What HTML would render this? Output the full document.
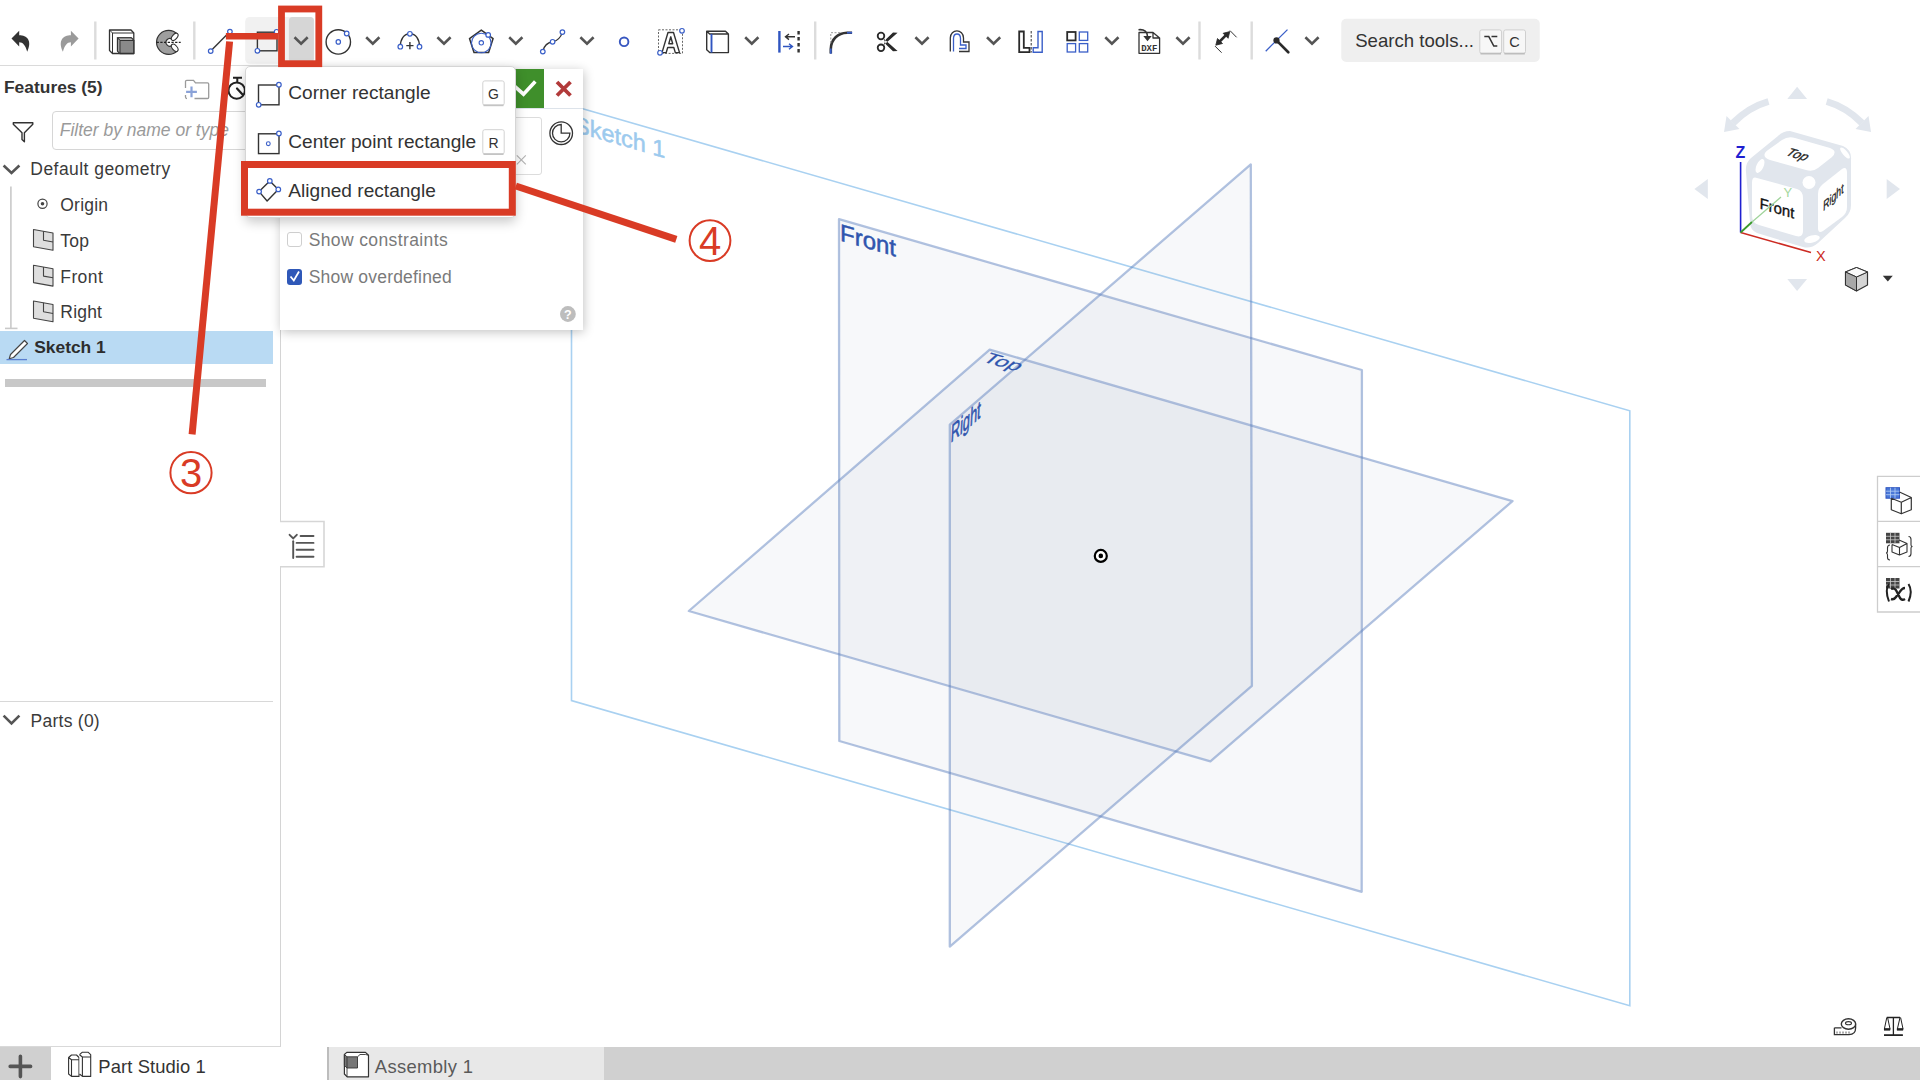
<!DOCTYPE html>
<html><head><meta charset="utf-8">
<style>
*{margin:0;padding:0;box-sizing:border-box}
html,body{width:1920px;height:1080px;overflow:hidden;background:#fff;font-family:"Liberation Sans",sans-serif;color:#333}
.a{position:absolute;white-space:nowrap}
.t{position:absolute;white-space:nowrap;line-height:1;font-size:17.5px;color:#3a3a3a}
svg{position:absolute;overflow:visible}
</style></head><body>

<!-- VIEWPORT SVG -->
<svg id="vp" style="left:0;top:0" width="1920" height="1080" viewBox="0 0 1920 1080">
  <!-- sketch plane outline -->
  <polygon points="571.5,105.6 1629.8,410.8 1629.8,1005.8 571.5,700.6" fill="none" stroke="#a9d1f1" stroke-width="1.6"/>
  <!-- planes -->
  <g fill="#a0acc0" fill-opacity="0.085" stroke="#5a7dbe" stroke-opacity="0.47" stroke-width="2.3" stroke-linejoin="round">
    <polygon points="839,219.2 1361.9,370 1361.7,891.8 839.3,741"/>
    <polygon points="688.8,611 989.7,349.7 1512.5,501.1 1210.4,761.4"/>
    <polygon points="949.8,424.7 1250.8,164.4 1251.9,685.9 949.8,946.6"/>
  </g>
  <!-- plane labels -->
  <text transform="matrix(1,0.2883,0,1,840,240.5)" font-family="Liberation Sans" font-size="24" fill="#2f55ae" stroke="#2f55ae" stroke-width="0.5">Front</text>
  <text transform="matrix(1.23,0.356,-0.79,0.686,981,361)" font-family="Liberation Sans" font-size="18" fill="#2f55ae" stroke="#2f55ae" stroke-width="0.25">Top</text>
  <text transform="matrix(0.747,-0.646,-0.075,1.494,950.6,443.1)" font-family="Liberation Sans" font-size="17" fill="#2f55ae" stroke="#2f55ae" stroke-width="0.5">Right</text>
  <text transform="matrix(1,0.2884,0,1,574,131.8)" font-family="Liberation Sans" font-size="23.5" fill="#9ccaee" stroke="#9ccaee" stroke-width="0.5">Sketch 1</text>
  <!-- origin -->
  <circle cx="1100.8" cy="555.9" r="6" fill="#fff" stroke="#000" stroke-width="2.2"/>
  <circle cx="1100.8" cy="555.9" r="2.3" fill="#000"/>
</svg>

<!-- VIEW CUBE -->
<svg style="left:0;top:0" width="1920" height="320">
<g fill="#e1e6ed">
<polygon points="1797.1,86.7 1787.3,98.9 1807.1,98.9"/>
<polygon points="1797.1,291.1 1787.3,278.9 1807.1,278.9"/>
<polygon points="1694.4,188.9 1707.8,178.9 1707.8,198.9"/>
<polygon points="1900,188.9 1886.7,178.9 1886.7,198.9"/>
</g>
<g fill="none" stroke="#e1e6ed" stroke-width="7">
<path d="M1768.5,101.5 C1756,105 1743,113 1733,123"/>
<path d="M1826.7,101.5 C1839,105 1852,113 1862,123"/>
</g>
<g fill="#e1e6ed">
<polygon points="1724,132 1726.5,116 1739.5,129"/>
<polygon points="1871,132 1868.5,116 1855.5,129"/>
</g>
<!-- cube body -->
<path d="M1790,131 L1843,146 Q1852,150 1851,160 L1851,205 Q1851,213 1845,218 L1818,243 Q1811,249 1803,247 L1757,233 Q1750,230 1750,222 L1746,172 Q1745,163 1751,158 L1778,136 Q1783,131 1790,131 Z" fill="#e1e6ed"/>
<!-- top face -->
<path d="M1795,138 L1830,148 Q1838,151 1832,157 L1818,168 Q1813,172 1806,170 L1770,160 Q1760,156 1768,150 L1782,140 Q1788,136 1795,138 Z" fill="#fff"/>
<!-- front face -->
<path d="M1757,178 L1797,189 Q1803,191 1803,198 L1803,231 Q1803,238 1796,236 L1759,225 Q1752,223 1752,216 L1752,183 Q1752,176 1757,178 Z" fill="#fff"/>
<!-- right face -->
<path d="M1842,169 Q1847,166 1847,173 L1847,207 Q1847,213 1842,217 L1823,231 Q1818,234 1818,228 L1818,194 Q1818,188 1823,184 Z" fill="#fff"/>
<!-- holes -->
<ellipse cx="1760" cy="166" rx="3.5" ry="7.5" transform="rotate(25 1760 166)" fill="#fff"/>
<circle cx="1809" cy="182.5" r="6.5" fill="#fff"/>
<ellipse cx="1812" cy="239" rx="8" ry="3.5" transform="rotate(-15 1812 239)" fill="#fff"/>
<ellipse cx="1845" cy="153" rx="2.5" ry="7" transform="rotate(-40 1845 153)" fill="#fff"/>
<!-- labels -->
<text transform="matrix(0.96,0.28,-0.6,0.8,1785,155)" font-family="Liberation Sans" font-style="italic" font-size="13" fill="#222" stroke="#222" stroke-width="0.3">Top</text>
<text transform="matrix(0.96,0.28,-0.03,1,1759.5,208.5)" font-family="Liberation Sans" font-size="15.5" fill="#111" stroke="#111" stroke-width="0.35">Front</text>
<text transform="matrix(0.7,-0.65,0.1,1,1823.5,211)" font-family="Liberation Sans" font-style="italic" font-size="12.5" fill="#222" stroke="#222" stroke-width="0.3">Right</text>
<!-- axes -->
<line x1="1740.6" y1="162" x2="1740.6" y2="232.5" stroke="#1f1fd0" stroke-width="1.6"/>
<line x1="1740.6" y1="232.5" x2="1811" y2="252.5" stroke="#cc2a22" stroke-width="1.5"/>
<line x1="1740.6" y1="232.5" x2="1752" y2="222" stroke="#3a9a2a" stroke-width="1.8"/>
<line x1="1752" y1="222" x2="1781" y2="197" stroke="#9fd39a" stroke-width="1.2"/>
<text x="1740.4" y="157.6" text-anchor="middle" font-family="Liberation Sans" font-weight="bold" font-size="16" fill="#1f1fd0">Z</text>
<text x="1820.8" y="260.5" text-anchor="middle" font-family="Liberation Sans" font-size="14.5" fill="#cc2a22">X</text>
<text x="1787.8" y="197" text-anchor="middle" font-family="Liberation Sans" font-size="13" fill="#a6d8a0">Y</text>
<!-- small cube -->
<path d="M1856.5,267.5 L1867.5,272 L1867.5,285 L1856.5,291 L1845.5,285 L1845.5,272 Z" fill="#d5d5d5" stroke="#333" stroke-width="1.2" stroke-linejoin="round"/>
<path d="M1845.5,272 L1856.5,277 L1867.5,272 M1856.5,277 V291" fill="none" stroke="#333" stroke-width="0.9"/>
<path d="M1845.5,272 L1856.5,267.5 L1867.5,272 L1856.5,277 Z" fill="#fafafa" stroke="#333" stroke-width="1"/>
<path d="M1845.5,272 L1856.5,277 V291 L1845.5,285 Z" fill="#a8a8a8" stroke="#333" stroke-width="1"/>
<polygon points="1882.8,275.8 1892.8,275.8 1887.8,281.5" fill="#333"/>
</svg>

<!-- TOOLBAR -->
<div class="a" style="left:0;top:65px;width:281px;height:1.2px;background:#dadada"></div>

<!-- TOOLBAR ICONS -->
<svg style="left:0;top:0" width="1920" height="70">
<g id="chev" fill="none" stroke="#555" stroke-width="2.6">
<polyline points="366.2,37.3 372.8,43.6 379.4,37.3"/>
<polyline points="437.4,37.3 444,43.6 450.6,37.3"/>
<polyline points="509.2,37.3 515.8,43.6 522.4,37.3"/>
<polyline points="580.4,37.3 587,43.6 593.6,37.3"/>
<polyline points="745.2,37.3 751.8,43.6 758.4,37.3"/>
<polyline points="915.4,37.3 922,43.6 928.6,37.3"/>
<polyline points="987,37.3 993.6,43.6 1000.2,37.3"/>
<polyline points="1105.3,37.3 1111.9,43.6 1118.5,37.3"/>
<polyline points="1176.4,37.3 1183,43.6 1189.6,37.3"/>
<polyline points="1305.4,37.3 1312,43.6 1318.6,37.3"/>
</g>
<g fill="#dcdcdc">
<rect x="94.1" y="21.5" width="2.4" height="38"/>
<rect x="193.1" y="21.5" width="2.4" height="38"/>
<rect x="814" y="21.5" width="2.4" height="38"/>
<rect x="1198.3" y="21.5" width="2.4" height="38"/>
<rect x="1250.5" y="21.5" width="2.4" height="38"/>
</g>
<!-- undo / redo -->
<path d="M11.5,38.6 L19.2,30.8 L19.2,35.2 C27,35.2 32.5,40.5 27.2,51.7 C25.5,45.5 23,42.3 19.2,42.3 L19.2,46.5 Z" fill="#333"/>
<path d="M78.6,38.6 L70.9,30.8 L70.9,35.2 C63.1,35.2 57.6,40.5 62.9,51.7 C64.6,45.5 67.1,42.3 70.9,42.3 L70.9,46.5 Z" fill="#9a9a9a"/>
<!-- feature icon -->
<g stroke="#333" stroke-width="1.3" stroke-linejoin="round">
<path d="M109.5,30 L131,30 L133.8,33 L133.8,53.5 L112.5,53.5 L109.5,50.5 Z" fill="#fff"/>
<path d="M109.5,30 L112.5,33 L133.8,33 M112.5,33 L112.5,53.5" fill="none" stroke-width="1"/>
<path d="M117.5,37.8 L131.3,37.8 L133.8,40.5 L133.8,53.5 L120,53.5 L117.5,51 Z" fill="#8a8a8a"/>
<path d="M117.5,37.8 L120,40.5 L133.8,40.5 L131.3,37.8 Z" fill="#b5b5b5" stroke-width="1"/>
<path d="M117.5,37.8 L120,40.5 L120,53.5 L117.5,51 Z" fill="#9f9f9f" stroke-width="1"/>
</g>
<!-- revolve C icon -->
<path d="M177.2,33.9 A12.05,12.05 0 1 0 177.2,50.8 L172.2,45.3 A3.8,3.8 0 1 1 172.2,39.4 Z" fill="#9e9e9e" stroke="#333" stroke-width="1.2" stroke-linejoin="round"/>
<ellipse cx="174.7" cy="36.9" rx="2.4" ry="4.3" transform="rotate(40 174.7 36.9)" fill="#fff" stroke="#333" stroke-width="1.1"/>
<ellipse cx="174.7" cy="47.8" rx="2.4" ry="4.3" transform="rotate(-40 174.7 47.8)" fill="#fff" stroke="#333" stroke-width="1.1"/>
<line x1="156.6" y1="42.35" x2="180.7" y2="42.35" stroke="#222" stroke-width="1.1" stroke-dasharray="2.3,1.4"/>
<!-- line tool -->
<line x1="210.7" y1="51.1" x2="230" y2="31.5" stroke="#333" stroke-width="1.4"/>
<circle cx="210.7" cy="51.1" r="2.3" fill="#fff" stroke="#3a5fc8" stroke-width="1.2"/>
<circle cx="229.9" cy="31.6" r="2.3" fill="#fff" stroke="#3a5fc8" stroke-width="1.2"/>
<!-- rectangle tool bg -->
<rect x="245.2" y="17" width="69" height="46.7" rx="4.5" fill="#f1f1f1"/>
<rect x="288.9" y="17" width="25" height="45" rx="3.5" fill="#d6d6d6"/>
<polyline points="294.5,37.3 301.1,43.6 307.7,37.3" fill="none" stroke="#555" stroke-width="2.6"/>
<rect x="257.4" y="32.2" width="19.6" height="18.6" fill="none" stroke="#333" stroke-width="1.4"/>
<circle cx="257.4" cy="50.8" r="2.3" fill="#fff" stroke="#3a5fc8" stroke-width="1.2"/>
<circle cx="276.6" cy="31.8" r="2.3" fill="#fff" stroke="#3a5fc8" stroke-width="1.2"/>
<!-- circle tool -->
<circle cx="338.3" cy="41.9" r="12.2" fill="none" stroke="#333" stroke-width="1.4"/>
<circle cx="338.3" cy="41.9" r="2.2" fill="#fff" stroke="#3a5fc8" stroke-width="1.2"/>
<circle cx="346.7" cy="33.5" r="2.3" fill="#fff" stroke="#3a5fc8" stroke-width="1.2"/>
<!-- arc tool -->
<path d="M400.3,46.7 C400.3,39 404,33.8 409.9,33.8 C415.8,33.8 419.5,39 419.5,46.7" fill="none" stroke="#333" stroke-width="1.4"/>
<path d="M409.9,42 V49.2 M406.3,45.6 H413.5" stroke="#333" stroke-width="1.4"/>
<circle cx="400.3" cy="46.7" r="2.3" fill="#fff" stroke="#3a5fc8" stroke-width="1.2"/>
<circle cx="409.9" cy="33.8" r="2.3" fill="#fff" stroke="#3a5fc8" stroke-width="1.2"/>
<circle cx="419.5" cy="46.7" r="2.3" fill="#fff" stroke="#3a5fc8" stroke-width="1.2"/>
<!-- polygon tool -->
<polygon points="481.3,30.1 493.1,38.6 488.6,52.6 474,52.6 469.5,38.6" fill="none" stroke="#333" stroke-width="1.5" stroke-linejoin="round"/>
<circle cx="481.3" cy="43" r="9.8" fill="none" stroke="#3a5fc8" stroke-width="1.1"/>
<circle cx="481.3" cy="42.8" r="2.2" fill="#fff" stroke="#3a5fc8" stroke-width="1.1"/>
<circle cx="488.2" cy="34.9" r="2.3" fill="#fff" stroke="#3a5fc8" stroke-width="1.2"/>
<!-- spline -->
<path d="M542.8,51.6 C544,45 548,42.5 552.6,41.8 C557,41 561,37 562.4,32.1" fill="none" stroke="#333" stroke-width="1.4"/>
<circle cx="542.8" cy="51.6" r="2.3" fill="#fff" stroke="#3a5fc8" stroke-width="1.2"/>
<circle cx="552.6" cy="41.8" r="2.3" fill="#fff" stroke="#3a5fc8" stroke-width="1.2"/>
<circle cx="562.4" cy="32.1" r="2.3" fill="#fff" stroke="#3a5fc8" stroke-width="1.2"/>
<!-- point -->
<circle cx="624.1" cy="41.8" r="4.3" fill="none" stroke="#3857c0" stroke-width="1.9"/>
<!-- text tool -->
<rect x="658.5" y="29.8" width="24" height="23.6" fill="none" stroke="#666" stroke-width="1" stroke-dasharray="2,1.5"/>
<path d="M662,52.6 L668,32.5 L673.5,32.5 L679.5,52.6 L675.3,52.6 L673.8,47.5 L667.7,47.5 L666.2,52.6 Z M668.8,43.8 L672.7,43.8 L670.75,36.8 Z" fill="#fff" stroke="#333" stroke-width="1.4" stroke-linejoin="round"/>
<circle cx="660" cy="52.8" r="2.3" fill="#fff" stroke="#3a5fc8" stroke-width="1.2"/>
<circle cx="682" cy="30.8" r="2.3" fill="#fff" stroke="#3a5fc8" stroke-width="1.2"/>
<!-- use/project -->
<path d="M706.7,31.2 L725.5,31.2 L728.4,34 L728.4,52.6 L709.7,52.6 L706.7,49.8 Z M706.7,31.2 L709.7,34 L728.4,34" fill="#fff" stroke="#333" stroke-width="1.4" stroke-linejoin="round"/>
<line x1="711.5" y1="34" x2="711.5" y2="52.6" stroke="#2f55c0" stroke-width="1.9"/>
<!-- mirror -->
<line x1="779.4" y1="31" x2="779.4" y2="52.6" stroke="#2f55c0" stroke-width="2.4"/>
<line x1="798.6" y1="31" x2="798.6" y2="52.6" stroke="#333" stroke-width="2.4" stroke-dasharray="3.5,2.5"/>
<path d="M795,36.8 H786 M789,34 L785.5,36.8 L789,39.6" fill="none" stroke="#333" stroke-width="1.4"/>
<path d="M783,46.5 H792 M789,43.7 L792.5,46.5 L789,49.3" fill="none" stroke="#2f55c0" stroke-width="1.4"/>
<!-- fillet -->
<path d="M830.8,53.5 L830.8,49 C831,39 838,33 847,32.7 L852,32.7" fill="none" stroke="#333" stroke-width="2.6"/>
<line x1="830.8" y1="48.5" x2="830.8" y2="53.8" stroke="#3a5fc8" stroke-width="1.8"/>
<line x1="847" y1="32.7" x2="852.2" y2="32.7" stroke="#3a5fc8" stroke-width="1.8"/>
<path d="M830.8,43 V32.7 H840" fill="none" stroke="#999" stroke-width="1" stroke-dasharray="2,1.5"/>
<!-- scissors -->
<g fill="none" stroke="#2a2a2a" stroke-width="1.8">
<circle cx="881" cy="36" r="3.3"/><circle cx="881" cy="47.8" r="3.3"/>
</g>
<path d="M883.5,38.5 L897.6,51 L893,51.3 L886,44.5 Z M883.5,45.3 L897.6,32.8 L893,32.5 L886,39.3 Z" fill="#2a2a2a"/>
<!-- offset -->
<path d="M950.3,51.5 V38 C950.3,28.5 963.5,28.5 963.5,38 V42 H969 V51.5 H959" fill="none" stroke="#333" stroke-width="1.3"/>
<path d="M953.5,51.5 V38.5 C953.5,32.5 960.5,32.5 960.5,38.5 V45 H966 V48.5 H959" fill="none" stroke="#3a5fc8" stroke-width="1.3"/>
<!-- linear pattern-ish -->
<path d="M1019.2,31.5 H1023.8 V47.8 H1029.5 V52.2 H1019.2 Z" fill="none" stroke="#2a2a2a" stroke-width="1.8"/>
<line x1="1031.2" y1="31" x2="1031.2" y2="52.6" stroke="#333" stroke-width="1" stroke-dasharray="2.5,1.5"/>
<path d="M1042.2,31.5 H1038 V47.8 H1033.2 V52.2 H1042.2 Z" fill="none" stroke="#3a5fc8" stroke-width="1.4"/>
<!-- grid pattern -->
<rect x="1067.2" y="32" width="8.4" height="8.4" fill="none" stroke="#2a2a2a" stroke-width="1.8"/>
<rect x="1079.3" y="32" width="8.4" height="8.4" fill="none" stroke="#3a5fc8" stroke-width="1.3"/>
<rect x="1067.2" y="43.6" width="8.4" height="8.4" fill="none" stroke="#3a5fc8" stroke-width="1.3"/>
<rect x="1079.3" y="43.6" width="8.4" height="8.4" fill="none" stroke="#3a5fc8" stroke-width="1.3"/>
<!-- DXF -->
<path d="M1139,32.5 H1153 L1159.6,38 V53.3 H1139 Z M1153,32.5 V38 H1159.6" fill="#fff" stroke="#333" stroke-width="1.3" stroke-linejoin="round"/>
<path d="M1138.5,29.8 C1144.5,29 1147.5,32 1147.5,36.5" fill="none" stroke="#333" stroke-width="1.6"/>
<path d="M1143.3,36 H1151.7 L1147.5,41.3 Z" fill="#333"/>
<text x="1149.3" y="51.3" text-anchor="middle" font-family="Liberation Mono" font-weight="bold" font-size="9" fill="#333">DXF</text>
<!-- dimension -->
<path d="M1219.2,42 L1226.5,34.7" stroke="#2a2a2a" stroke-width="2.6"/>
<path d="M1215.8,45.2 L1217.5,38.5 L1222.5,43.5 Z M1229.8,31.6 L1228.1,38.3 L1223.1,33.3 Z" fill="#2a2a2a" stroke="#2a2a2a" stroke-width="0.8" stroke-linejoin="round"/>
<path d="M1215,46.1 L1221.6,52.7 M1230,30.6 L1236.6,37.3" fill="none" stroke="#333" stroke-width="1"/>
<!-- construction -->
<line x1="1265.7" y1="51.2" x2="1287.5" y2="29.6" stroke="#3a5fc8" stroke-width="1.3"/>
<line x1="1276.5" y1="40.4" x2="1288.3" y2="52.2" stroke="#2a2a2a" stroke-width="2.7" stroke-linecap="round"/>
<circle cx="1276.5" cy="40.4" r="3.1" fill="#2a2a2a"/>
<!-- search box -->
<rect x="1341.25" y="18.75" width="198.5" height="43.2" rx="5" fill="#efefef"/>
</svg>

<!-- SEARCH TEXT + KEYS -->
<div class="t" style="left:1355.2px;top:31.9px;font-size:18.6px;color:#333">Search tools...</div>
<svg style="left:0;top:0" width="1920" height="70">
<g fill="#f7f7f7" stroke="#cfcfcf" stroke-width="1">
<rect x="1479.8" y="29.9" width="21.8" height="23.6" rx="2"/>
<rect x="1503.7" y="29.9" width="21.8" height="23.6" rx="2"/>
</g>
<g stroke="#bdbdbd" stroke-width="1.8"><line x1="1480.5" y1="53.6" x2="1501" y2="53.6"/><line x1="1504.4" y1="53.6" x2="1524.8" y2="53.6"/></g>
<path d="M1484.3,36.6 H1488.8 L1493.8,46 H1497.3 M1491.5,36.6 H1497.3" fill="none" stroke="#333" stroke-width="1.5"/>
<text x="1514.5" y="46.8" text-anchor="middle" font-family="Liberation Sans" font-size="14.5" fill="#333">C</text>
</svg>
<!-- RIGHT ICONS -->
<svg style="left:0;top:0" width="1920" height="1080">
<path d="M1921,476.3 H1877.5 V612 H1921 M1877.5,521.3 H1921 M1877.5,566.7 H1921" fill="#fff" stroke="#cdcdcd" stroke-width="1.3"/>
<!-- icon1 -->
<rect x="1886" y="487.7" width="13.5" height="10.5" fill="#4a78d8" stroke="#2f55c0" stroke-width="1"/>
<path d="M1886,491.2 H1899.5 M1886,494.7 H1899.5 M1890.5,487.7 V498.2 M1895,487.7 V498.2" stroke="#b8d0f5" stroke-width="0.8"/>
<path d="M1899.5,492 L1911.3,497.5 V509.8 L1901.3,513.8 L1891.3,509.8 V498.3 M1891.3,498.3 L1901.3,502.3 L1911.3,497.5 M1901.3,502.3 V513.8" fill="none" stroke="#333" stroke-width="1.2" stroke-linejoin="round"/>
<!-- icon2 -->
<rect x="1886" y="532.8" width="13.5" height="10.5" fill="#444"/>
<path d="M1886,536.3 H1899.5 M1886,539.8 H1899.5 M1890.5,532.8 V543.3 M1895,532.8 V543.3" stroke="#ccc" stroke-width="0.8"/>
<path d="M1899,540 L1907,543.5 V552 L1899.5,555 L1892,552 V544.5 M1892,544.5 L1899.5,547.5 L1907,543.5 M1899.5,547.5 V555" fill="none" stroke="#333" stroke-width="1.1" stroke-linejoin="round"/>
<path d="M1890,545 Q1887.5,545 1887.5,548 V551 Q1887.5,553 1886,553 Q1887.5,553 1887.5,555 V557.5 Q1887.5,560 1890,560 M1908.5,536.5 Q1911,536.5 1911,539.5 V545 Q1911,546.5 1912.5,546.5 Q1911,546.5 1911,548 V553.5 Q1911,556.5 1908.5,556.5" fill="none" stroke="#333" stroke-width="1.1"/>
<!-- icon3 -->
<rect x="1886" y="578" width="13.5" height="10.5" fill="#444"/>
<path d="M1886,581.5 H1899.5 M1886,585 H1899.5 M1890.5,578 V588.5 M1895,578 V588.5" stroke="#ccc" stroke-width="0.8"/>
<path d="M1889,584 Q1884.5,590 1889,601.5 M1908.5,584 Q1913,591 1908.5,601.5" fill="none" stroke="#222" stroke-width="2"/>
<path d="M1891,589 Q1895,587 1897,592 L1900,598 Q1902,601 1905,599 M1905,588 Q1902,588 1899,593 L1896,597 Q1894,600 1891,599" fill="none" stroke="#222" stroke-width="2.4"/>
<!-- bottom right: tape -->
<path d="M1834.4,1027.8 H1841.5 M1834.4,1027.8 V1034.6 H1849 Q1855.6,1034.6 1855.6,1028 V1024.5" fill="none" stroke="#333" stroke-width="1.3"/>
<ellipse cx="1848.5" cy="1024" rx="7.2" ry="5.2" fill="none" stroke="#333" stroke-width="1.4"/>
<ellipse cx="1848.5" cy="1023.2" rx="3" ry="1.6" fill="none" stroke="#333" stroke-width="1.1"/>
<path d="M1837,1033.6 V1031.5 M1840,1033.6 V1031.5 M1843,1033.6 V1031.5 M1846,1033.6 V1031.5 M1849,1033.6 V1031.5" stroke="#333" stroke-width="0.8"/>
<!-- bottom right: balance -->
<path d="M1886.8,1017.5 H1900 M1893.4,1017.5 V1034.5 M1884,1035.2 H1902.8" stroke="#222" stroke-width="1.3"/>
<path d="M1884,1035.2 H1902.8" stroke="#222" stroke-width="1.5"/>
<path d="M1886.8,1017.5 L1884.3,1029.3 H1890.1 L1887.6,1017.5 M1900,1017.5 L1897.3,1029.3 H1903.1 L1900.6,1017.5" fill="none" stroke="#222" stroke-width="1"/>
<rect x="1884" y="1028.2" width="6.2" height="2.4" fill="#222"/>
<rect x="1896.9" y="1028.2" width="6.2" height="2.4" fill="#222"/>
</svg>

<!-- LEFT PANEL -->
<div class="a" style="left:0;top:66px;width:281px;height:980.5px;background:#fff;border-right:1.5px solid #d4d4d4;border-bottom:1.5px solid #d9d9d9"></div>
<div class="t" style="left:4px;top:79px;font-weight:bold;font-size:17.4px;color:#333">Features (5)</div>
<div class="a" style="left:51.5px;top:110.5px;width:240px;height:39.5px;border:1.5px solid #d6d6d6;border-radius:4px"></div>
<div class="t" style="left:59.7px;top:122.3px;font-style:italic;color:#9a9a9a;font-size:17.5px;letter-spacing:0px">Filter by name or type</div>
<div class="t" style="left:30.3px;top:161px;letter-spacing:0.45px">Default geometry</div>
<div class="t" style="left:60.3px;top:197.3px;letter-spacing:0.2px">Origin</div>
<div class="t" style="left:60.3px;top:232.6px;letter-spacing:0.2px">Top</div>
<div class="t" style="left:60.3px;top:268.5px;letter-spacing:0.4px">Front</div>
<div class="t" style="left:60.3px;top:304.2px;letter-spacing:0.2px">Right</div>
<div class="a" style="left:0;top:331px;width:272.5px;height:33px;background:#b9daf3"></div>
<div class="t" style="left:34.2px;top:339px;font-weight:bold;font-size:17.4px;color:#2d2d2d">Sketch 1</div>
<div class="a" style="left:4.7px;top:378.8px;width:261.5px;height:8.5px;background:#c8c8c8"></div>
<div class="a" style="left:0;top:700.6px;width:272.5px;height:1.5px;background:#d8d8d8"></div>
<div class="t" style="left:30.6px;top:712.5px;letter-spacing:0.25px">Parts (0)</div>

<!-- LEFT PANEL ICONS -->
<svg style="left:0;top:0" width="330" height="740">
<!-- add folder -->
<path d="M185.5,88 V81.5 Q185.5,80.3 186.7,80.3 H193.5 L195.5,82.8 H207.5 Q208.7,82.8 208.7,84 V97.3 Q208.7,98.5 207.5,98.5 H194.5 M187,98.5 Q185.5,98.5 185.5,97 V95" fill="none" stroke="#9a9a9a" stroke-width="1.3"/>
<path d="M191.5,86.5 V97.3 M186.1,91.9 H196.9" stroke="#8aa2d8" stroke-width="2.2"/>
<!-- timer -->
<circle cx="236.7" cy="90.6" r="8.2" fill="none" stroke="#222" stroke-width="2"/>
<path d="M233,77.8 H242 M237.3,78 V82.5" stroke="#222" stroke-width="2"/>
<path d="M237,88.5 L243,95" stroke="#222" stroke-width="2.2" stroke-linecap="round"/>
<!-- filter -->
<path d="M13.3,122.8 H32.8 V124.2 L24.4,132.8 V141.8 L22,139.5 V132.8 L13.3,124.2 Z" fill="none" stroke="#333" stroke-width="1.4" stroke-linejoin="round"/>
<!-- chevrons -->
<polyline points="3.6,165.5 11.5,172.9 19.4,165.5" fill="none" stroke="#555" stroke-width="2.6"/>
<polyline points="3.6,715.6 11.5,723.5 19.4,715.6" fill="none" stroke="#555" stroke-width="2.6"/>
<!-- tree line -->
<line x1="10.9" y1="186.5" x2="10.9" y2="328.5" stroke="#c9c9c9" stroke-width="1.6"/>
<line x1="5" y1="328.4" x2="17.5" y2="328.4" stroke="#c9c9c9" stroke-width="1.6"/>
<!-- origin icon -->
<circle cx="42.5" cy="203.8" r="4.6" fill="none" stroke="#444" stroke-width="1.2"/>
<circle cx="42.5" cy="203.8" r="1.8" fill="#444"/>
<!-- plane icons -->
<g id="pl" fill="#dedede" stroke="#444" stroke-width="1.1" stroke-linejoin="round">
<path d="M33.5,229.5 L53,233 V250.3 L33.5,246.8 Z"/>
<path d="M43.5,231.3 V240.3 L53,242" fill="none"/>
</g>
<g fill="#dedede" stroke="#444" stroke-width="1.1" stroke-linejoin="round">
<path d="M33.5,265.3 L53,268.8 V286.1 L33.5,282.6 Z"/>
<path d="M43.5,267.1 V276.1 L53,277.8" fill="none"/>
</g>
<g fill="#dedede" stroke="#444" stroke-width="1.1" stroke-linejoin="round">
<path d="M33.5,301 L53,304.5 V321.8 L33.5,318.3 Z"/>
<path d="M43.5,302.8 V311.8 L53,313.5" fill="none"/>
</g>
<!-- pencil -->
<path d="M10.5,354.5 L24.5,340.5 L27.5,343.5 L13.5,357.5 L9.2,358.8 Z" fill="#fff" stroke="#444" stroke-width="1.2" stroke-linejoin="round"/>
<line x1="6.5" y1="359.6" x2="27" y2="359.6" stroke="#5a7fd0" stroke-width="1.3"/>
<!-- list toggle tab -->
<path d="M280,521.5 H324 V566.8 H280" fill="#fff" stroke="#d6d6d6" stroke-width="1.6"/>
<g stroke="#555" stroke-width="1.9" stroke-linecap="round" fill="none">
<polyline points="289.6,534.8 293.2,538.5 296.8,534.8"/>
<line x1="293.2" y1="541.2" x2="293.2" y2="558"/>
<line x1="300.6" y1="536" x2="313.5" y2="536"/>
<line x1="296.6" y1="542.9" x2="313.5" y2="542.9"/>
<line x1="296.6" y1="549.8" x2="313.5" y2="549.8"/>
<line x1="296.6" y1="556.7" x2="313.5" y2="556.7"/>
</g>
</svg>

<!-- BOTTOM TABS -->
<div class="a" style="left:0;top:1046.8px;width:1920px;height:34px;background:#d0d0d0"></div>
<div class="a" style="left:51px;top:1046.8px;width:276px;height:34px;background:#fff"></div>
<div class="a" style="left:327px;top:1046.8px;width:276.5px;height:34px;background:#e8e8e8;border-left:2px solid #bdbdbd"></div>
<div class="t" style="left:98.3px;top:1057.8px;font-size:18.4px;letter-spacing:0.1px;color:#333">Part Studio 1</div>
<div class="t" style="left:374.8px;top:1057.6px;font-size:18.4px;color:#5a5a5a;letter-spacing:0.35px">Assembly 1</div>
<svg style="left:0;top:0" width="1920" height="1080">
<!-- bottom tabs -->
<path d="M20.4,1056.2 V1076.6 M10.2,1066.4 H30.6" stroke="#555" stroke-width="3.6" stroke-linecap="round"/>
<path d="M68.6,1057.5 L71.5,1055 H76.5 L79,1057.5 V1076.4 H71.5 L68.6,1074 Z M68.6,1057.5 L71.5,1059.8 H79 M71.5,1059.8 V1076.4" fill="#fff" stroke="#333" stroke-width="1.1" stroke-linejoin="round"/>
<path d="M79.5,1054.7 L82.4,1052.2 H88 L90.7,1054.7 V1076.4 H82.4 L79.5,1074 M82.4,1052.2 L82.4,1052.2 M79.5,1054.7 L82.4,1057 H90.7 M82.4,1057 V1076.4" fill="#fff" stroke="#333" stroke-width="1.1" stroke-linejoin="round"/>
<path d="M344.4,1054.5 L346.8,1052.4 H365.5 L368.5,1055.2 V1076.8 H347.2 L344.4,1074 Z" fill="#fff" stroke="#333" stroke-width="1.2" stroke-linejoin="round"/>
<path d="M344.4,1054.5 L347,1056.8 L357.5,1056.8 L357.5,1068 L347,1068 L344.4,1065.5 Z" fill="#777" stroke="#333" stroke-width="0.9"/>
<path d="M347,1056.8 L347,1076.8 M357.5,1056.8 L360,1054.5 H365.5 L368.5,1055.2" fill="none" stroke="#333" stroke-width="0.9"/>
</svg>
<!-- SKETCH DIALOG -->
<div class="a" style="left:280px;top:69px;width:303px;height:261px;background:#fff;box-shadow:1px 2px 10px rgba(0,0,0,0.24)"></div>
<div class="a" style="left:515px;top:69.3px;width:29px;height:38.5px;background:#3f8f2b"></div>
<div class="a" style="left:280px;top:107.8px;width:303px;height:1px;background:#dde3ea"></div>
<div class="a" style="left:420px;top:116.6px;width:122.4px;height:58.8px;border:1.3px solid #dcdcdc;border-radius:3px"></div>
<div class="a" style="left:286.7px;top:232.4px;width:15.5px;height:15px;border:1.3px solid #cfcfcf;border-radius:3px"></div>
<div class="t" style="left:308.7px;top:232px;color:#7a7a7a;letter-spacing:0.38px">Show constraints</div>
<div class="a" style="left:286.7px;top:269.4px;width:15.5px;height:15.6px;background:#2f58b8;border-radius:3px"></div>
<div class="t" style="left:308.7px;top:269px;color:#7a7a7a;letter-spacing:0.2px">Show overdefined</div>

<!-- DIALOG + MENU ICONS -->
<svg style="left:0;top:0" width="600" height="340">
<!-- check -->
<path d="M513,84.8 L523.5,94.2 L535.3,81.6" fill="none" stroke="#fff" stroke-width="3.6"/>
<!-- red X -->
<path d="M557,82 L570.5,95.5 M570.5,82 L557,95.5" stroke="#b23a3a" stroke-width="3.8"/>
<!-- input x -->
<path d="M516.8,155.3 L525.8,164.3 M525.8,155.3 L516.8,164.3" stroke="#b5b5b5" stroke-width="1.2"/>
<!-- clock -->
<circle cx="561.2" cy="133.2" r="11.3" fill="none" stroke="#333" stroke-width="1.3"/>
<path d="M561.2,124.5 A8.7,8.7 0 1 0 569.9,133.2 H561.2 Z" fill="none" stroke="#333" stroke-width="1.3"/>
<!-- help -->
<circle cx="567.9" cy="314" r="7.9" fill="#bdbdbd"/>
<text x="567.9" y="319.3" text-anchor="middle" font-family="Liberation Sans" font-weight="bold" font-size="12.5" fill="#fff">?</text>
<!-- checkbox check -->
<path d="M290.5,276.5 L293.8,280.5 L299,271.5" fill="none" stroke="#fff" stroke-width="1.8"/>
</svg>

<!-- DROPDOWN MENU -->
<div class="a" style="left:244.5px;top:66px;width:271px;height:152px;background:#fff;border:1px solid #d5d5d5;border-radius:5px;box-shadow:0 4px 12px rgba(0,0,0,0.22)"></div>
<div class="t" style="left:288.3px;top:83.4px;font-size:19.1px;color:#333">Corner rectangle</div>
<div class="t" style="left:288.3px;top:131.9px;font-size:19.1px;color:#333">Center point rectangle</div>
<div class="t" style="left:288.3px;top:180.7px;font-size:19.1px;color:#333">Aligned rectangle</div>

<svg style="left:0;top:0" width="600" height="340">
<!-- corner rect icon -->
<rect x="258.5" y="85" width="20.5" height="19.8" fill="none" stroke="#333" stroke-width="1.4"/>
<circle cx="258.7" cy="104.8" r="2.3" fill="#fff" stroke="#3a5fc8" stroke-width="1.2"/>
<circle cx="278.9" cy="84.7" r="2.3" fill="#fff" stroke="#3a5fc8" stroke-width="1.2"/>
<!-- center rect icon -->
<rect x="258.5" y="133.8" width="20.5" height="19.8" fill="none" stroke="#333" stroke-width="1.4"/>
<circle cx="268.3" cy="143.7" r="1.9" fill="#fff" stroke="#3a5fc8" stroke-width="1.1"/>
<circle cx="278.9" cy="133.5" r="2.3" fill="#fff" stroke="#3a5fc8" stroke-width="1.2"/>
<!-- aligned rect icon -->
<polygon points="259.1,191.6 269.8,180.9 278.3,189.4 267.1,201" fill="none" stroke="#333" stroke-width="1.4" stroke-linejoin="round"/>
<circle cx="259.1" cy="191.6" r="2.3" fill="#fff" stroke="#3a5fc8" stroke-width="1.2"/>
<circle cx="269.8" cy="180.9" r="2.3" fill="#fff" stroke="#3a5fc8" stroke-width="1.2"/>
<circle cx="278.3" cy="189.4" r="2.3" fill="#fff" stroke="#3a5fc8" stroke-width="1.2"/>
<!-- keys -->
<g fill="#fff" stroke="#d2d2d2" stroke-width="1">
<rect x="482.8" y="80.9" width="21.4" height="24.4" rx="2"/>
<rect x="482.8" y="129.7" width="21.4" height="24.4" rx="2"/>
</g>
<g stroke="#c4c4c4" stroke-width="1.8"><line x1="483.5" y1="105.3" x2="503.5" y2="105.3"/><line x1="483.5" y1="154.1" x2="503.5" y2="154.1"/></g>
<text x="493.5" y="99" text-anchor="middle" font-family="Liberation Sans" font-size="14" fill="#333">G</text>
<text x="493.5" y="147.8" text-anchor="middle" font-family="Liberation Sans" font-size="14" fill="#333">R</text>
</svg>

<!-- ANNOTATIONS -->
<svg style="left:0;top:0" width="1920" height="1080">
  <g fill="none" stroke="#d93b25">
    <rect x="281.5" y="9" width="37.3" height="54.7" stroke-width="6.8"/>
    <rect x="244.5" y="164.5" width="267.8" height="47.7" stroke-width="7"/>
    <line x1="225.9" y1="36.3" x2="278" y2="36.3" stroke-width="6.6"/>
    <line x1="229.6" y1="41.5" x2="192.1" y2="434.4" stroke-width="7"/>
    <line x1="515.8" y1="186" x2="676.3" y2="239.4" stroke-width="7"/>
    <circle cx="191" cy="472.7" r="20.6" stroke-width="2"/>
    <circle cx="710" cy="240.6" r="20.4" stroke-width="2"/>
  </g>
  <text x="191" y="487" text-anchor="middle" font-family="Liberation Sans" font-size="40" fill="#d93b25">3</text>
  <text x="710" y="255" text-anchor="middle" font-family="Liberation Sans" font-size="40" fill="#d93b25">4</text>
</svg>

</body></html>
